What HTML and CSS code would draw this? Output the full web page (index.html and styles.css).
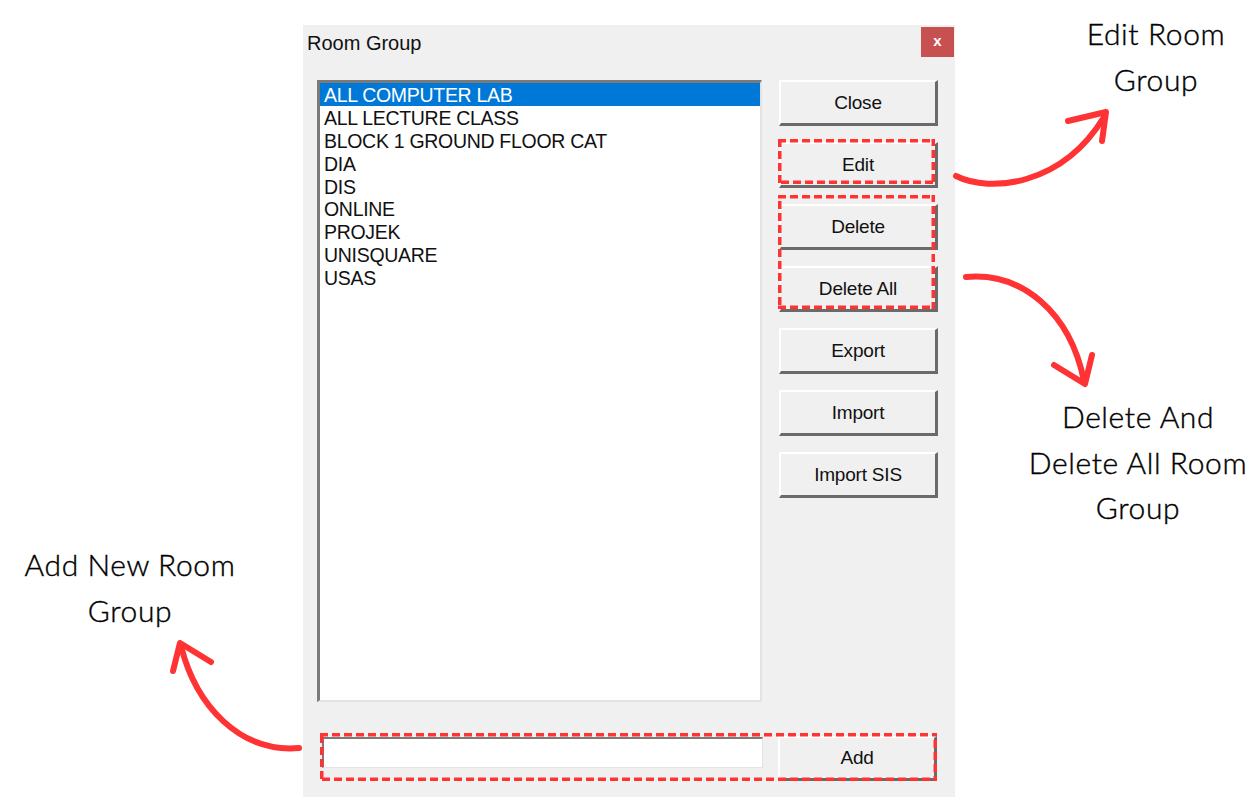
FILE: index.html
```html
<!DOCTYPE html>
<html lang="en">
<head>
    <meta charset="UTF-8">
    <meta name="viewport" content="width=device-width, initial-scale=1.0">
    <title>Room Group</title>
    <link rel="stylesheet" href="styles.css">
</head>
<body>

    <div class="stage">

        <!-- Room Group dialog -->
        <div class="window">
            <div class="titlebar">
                <span class="title">Room Group</span>
                <div class="close-x">x</div>
            </div>

            <div class="window-body">
                <ul class="listbox">
                    <li class="selected">ALL COMPUTER LAB</li>
                    <li>ALL LECTURE CLASS</li>
                    <li>BLOCK 1 GROUND FLOOR CAT</li>
                    <li>DIA</li>
                    <li>DIS</li>
                    <li>ONLINE</li>
                    <li>PROJEK</li>
                    <li>UNISQUARE</li>
                    <li>USAS</li>
                </ul>

                <div class="buttons">
                    <button class="btn">Close</button>
                    <div class="marked">
                        <button class="btn">Edit</button>
                        <svg class="dash edit-dash"><rect width="100%" height="100%"/></svg>
                    </div>
                    <div class="marked delete-group">
                        <button class="btn">Delete</button>
                        <button class="btn">Delete All</button>
                        <svg class="dash delete-dash"><rect width="100%" height="100%"/></svg>
                    </div>
                    <button class="btn">Export</button>
                    <button class="btn">Import</button>
                    <button class="btn">Import SIS</button>
                </div>
            </div>

            <div class="add-row marked">
                <input type="text" class="textbox">
                <button class="btn add-btn">Add</button>
                <svg class="dash add-dash"><rect width="100%" height="100%"/></svg>
            </div>
        </div>

        <!-- Annotations -->
        <div class="note note-edit">Edit Room<br>Group</div>
        <div class="note note-delete">Delete And<br>Delete All Room<br>Group</div>
        <div class="note note-add">Add New Room<br>Group</div>

        <svg class="arrows" width="1253" height="806">
            <!-- edit -->
            <path d="M956 176 C 990 193, 1062 186, 1104 117"/>
            <path d="M1068 121 L1106 112 L1102 141"/>
            <!-- delete -->
            <path d="M966 277 C 1022 272, 1070 312, 1084 381"/>
            <path d="M1054 365 L1085 384 L1092 355"/>
            <!-- add -->
            <path d="M299 748 C 240 753, 196 706, 181 646"/>
            <path d="M173 671 L180 643 L211 662"/>
        </svg>
    </div>

</body>
</html>
```

FILE: styles.css
```css
/* General */
body { margin: 0; background: #fff; font-family: "Liberation Sans", Arial, sans-serif; overflow: hidden; }
.stage { position: relative; width: 1253px; height: 806px; padding-top: 25px; box-sizing: border-box; }

/* Dialog */
.window { margin-left: 303px; width: 652px; height: 772px; background: #f0f0f0; }
.titlebar { display: flex; justify-content: space-between; align-items: flex-start; height: 40px; }
.title { padding: 8px 0 0 4px; font-size: 20px; line-height: 20px; color: #111; }
.close-x { width: 33px; height: 30px; margin: 2px 1px 0 0; background: #c75050; color: #fff;
           font-size: 15px; font-weight: bold; line-height: 27px; text-align: center; }

.window-body { display: flex; gap: 17px; padding: 15px 0 0 14px; }

/* List */
.listbox { list-style: none; margin: 0; padding: 0; width: 445px; height: 622px; box-sizing: border-box;
           background: #fff; border-style: solid; border-width: 3px 2px 2px 3px;
           border-color: #7a7a7a #e3e3e3 #e3e3e3 #7a7a7a; font-size: 19.5px; letter-spacing: -0.3px; }
.listbox li { line-height: 22.9px; padding: 1px 0 0 4px; height: 21.9px; color: #111; white-space: nowrap; }
.listbox li.selected { background: #0078d7; color: #fff; }

/* Buttons */
.buttons { display: flex; flex-direction: column; gap: 16px; width: 159px; }
.btn { display: block; width: 159px; height: 46px; padding: 0; background: #f0f0f0; color: #111;
       font-family: "Liberation Sans", Arial, sans-serif; font-size: 19px; letter-spacing: -0.2px;
       border-style: solid; border-width: 2px 3px 3px 2px; border-color: #fff #6a6a6a #6a6a6a #fff; }
.delete-group { display: flex; flex-direction: column; gap: 16px; }

/* Bottom row */
.add-row { display: flex; align-items: flex-start; width: 617px; height: 48px; margin: 31px 0 0 17px; }
.textbox { width: 442px; height: 31px; margin: 4px 0 0 2px; box-sizing: border-box; background: #fff;
           border-style: solid; border-width: 2px 1px 1px 2px; border-color: #7a7a7a #e3e3e3 #e3e3e3 #7a7a7a; }
.add-btn { height: 45px; margin: 3px 0 0 15px; }

/* Dashed red highlight boxes */
.marked { position: relative; }
.dash { position: absolute; overflow: hidden; pointer-events: none; }
.dash rect { fill: none; stroke: #ff3333; stroke-width: 7; stroke-dasharray: 8 4; }
.edit-dash { left: -1px; top: -3px; width: 157px; height: 45px; }
.delete-dash { left: -1px; top: -9px; width: 157px; height: 114px; }
.add-dash { left: 0; top: 0; width: 617px; height: 48px; }

/* Annotations */
.note { position: absolute; font-family: Lato, "Open Sans", sans-serif; font-weight: 300; font-size: 30px;
        letter-spacing: 0.6px; line-height: 45.5px; text-align: center; color: #000; white-space: nowrap;
        -webkit-text-stroke: 0.4px #000; }
.note-edit { left: 1036px; top: 11px; width: 240px; }
.note-delete { left: 1018px; top: 394px; width: 240px; }
.note-add { left: 10px; top: 542px; width: 240px; }

.arrows { position: absolute; left: 0; top: 0; pointer-events: none; }
.arrows path { fill: none; stroke: #ff3333; stroke-width: 6; stroke-linecap: round; stroke-linejoin: round; }
```
